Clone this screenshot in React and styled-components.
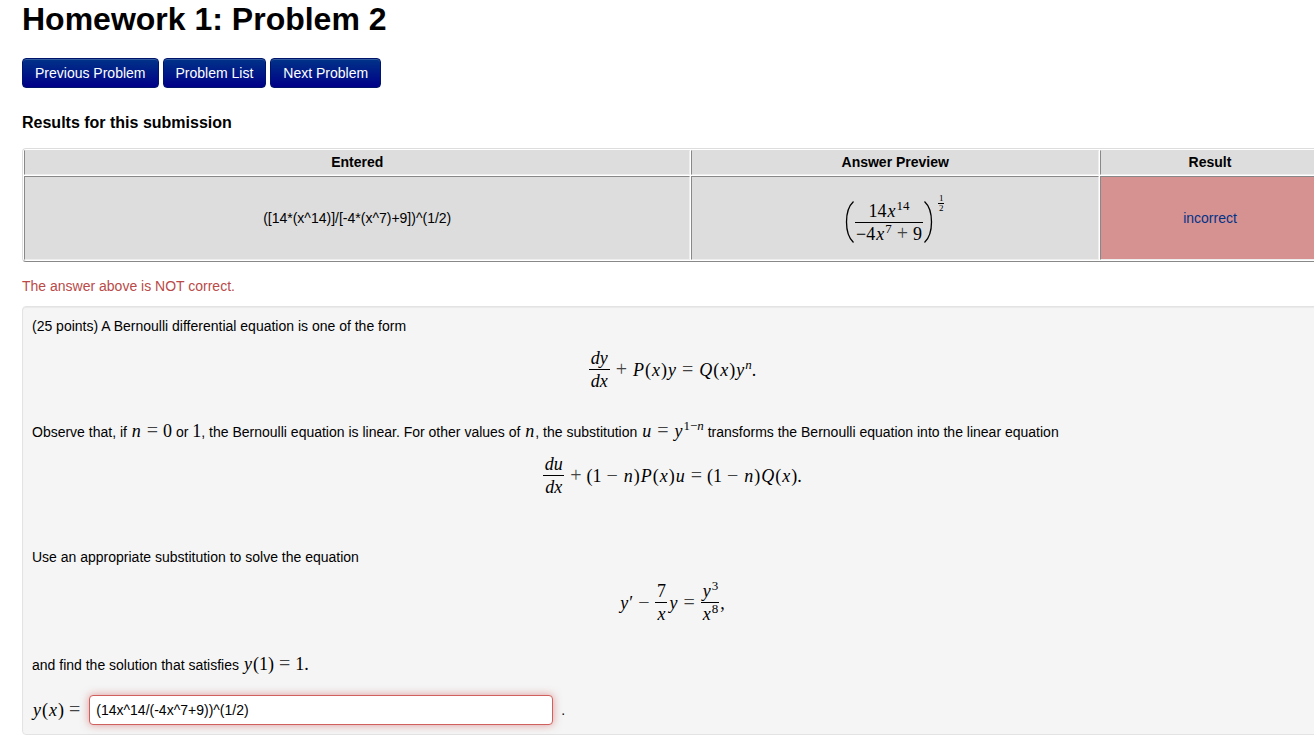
import styled, { createGlobalStyle } from "styled-components";

const GlobalStyle = createGlobalStyle`
  body {
    margin: 0;
    background: #fff;
    color: #000;
    font-family: "Liberation Sans", Arial, sans-serif;
    font-size: 14px;
    line-height: 20px;
    overflow-x: hidden;
  }
`;

// content runs a little past the right edge of the window
const Page = styled.main`
  margin: 0 -8px 0 22px;
`;

const Title = styled.h1`
  margin: 0;
  font-size: 32px;
  line-height: 38px;
`;

const Nav = styled.nav`
  display: flex;
  gap: 4px;
  margin-top: 20px;
`;

const NavButton = styled.button`
  padding: 4px 12px;
  border: 1px solid #00146b;
  border-radius: 4px;
  background: linear-gradient(#003388, #000088);
  box-shadow: inset 0 1px 0 rgba(255, 255, 255, 0.2);
  color: #fff;
  font: inherit;
`;

const SubTitle = styled.h2`
  margin: 25px 0 15px;
  font-size: 16px;
  line-height: 20px;
`;

const Results = styled.table`
  width: 100%;
  border: 1px solid;
  border-color: #ddd #888 #888 #ddd;
  border-radius: 4px;
  border-spacing: 1px;
  text-align: center;
`;

const Head = styled.th`
  width: ${(props) => props.w};
  height: 20px;
  padding: 1px 2px 2px;
  border: 1px solid;
  border-color: #ddd #eee #eee #888;
  background: #ddd;
`;

const Cell = styled.td`
  height: 80px;
  padding: 1px;
  border: 1px solid;
  border-color: #888 #eee #eee #888;
  background: ${(props) => props.bg || "#ddd"};
`;

const ResultLink = styled.a`
  color: #003388;
  text-decoration: none;
`;

const Warning = styled.p`
  margin: 14px 0 10px;
  color: #b94a48;
`;

const Problem = styled.section`
  padding: 9px;
  border: 1px solid #e3e3e3;
  border-radius: 4px;
  background: #f5f5f5;
  box-shadow: inset 0 1px 1px rgba(0, 0, 0, 0.05);
`;

const Text = styled.p`
  margin: 0;
`;

const Math = styled.span`
  font-family: "Liberation Serif", "Times New Roman", serif;
  font-size: 18px;
  line-height: 20px;
  white-space: nowrap;

  i {
    margin: 0 1px;
  }
`;

const Display = styled.div`
  display: flex;
  justify-content: center;
  align-items: center;
  margin: ${(props) => props.m};
`;

const Row = styled(Math)`
  display: flex;
  align-items: center;
`;

const Op = styled.span`
  margin: 0 5px;
  color: #444;
  font-size: 20px;
  line-height: 0;
`;

const Sup = styled.sup`
  font-size: 13px;
  line-height: 0;
  vertical-align: 7px;

  i {
    margin: 0;
  }
`;

const FracBox = styled.span`
  display: inline-flex;
  flex-direction: column;
  margin: 0 1px;
  text-align: center;
  font-size: ${(props) => (props.small ? "9px" : "18px")};
  line-height: ${(props) => (props.small ? "9px" : "22px")};
`;

const Top = styled.span`
  border-bottom: 1px solid #000;
`;

const Bottom = styled.span`
  padding: 0 1px;
`;

function Frac({ top, bottom, small }) {
  return (
    <FracBox small={small ? 1 : undefined}>
      <Top>{top}</Top>
      <Bottom>{bottom}</Bottom>
    </FracBox>
  );
}

const Paren = styled.svg`
  width: 9px;
  height: 42px;
`;

const Power = styled.span`
  align-self: flex-start;
  display: flex;
  margin: -6px 0 0 4px;
`;

const AnswerRow = styled.div`
  display: flex;
  align-items: center;
  margin-top: 20px;
`;

const AnswerInput = styled.input`
  box-sizing: border-box;
  width: 464px;
  height: 30px;
  margin: 0 8px 0 4px;
  padding: 4px 6px;
  border: 1px solid #d0605e;
  border-radius: 4px;
  background: #fff;
  box-shadow: 0 0 8px rgba(200, 60, 60, 0.5);
  color: #000;
  font: inherit;
`;

function App() {
  return (
    <>
      <GlobalStyle />
      <Page>
        <Title>Homework 1: Problem 2</Title>
        <Nav>
          <NavButton>Previous Problem</NavButton>
          <NavButton>Problem List</NavButton>
          <NavButton>Next Problem</NavButton>
        </Nav>

        <SubTitle>Results for this submission</SubTitle>
        <Results>
          <thead>
            <tr>
              <Head w="51.5%">Entered</Head>
              <Head>Answer Preview</Head>
              <Head w="17%">Result</Head>
            </tr>
          </thead>
          <tbody>
            <tr>
              <Cell>([14*(x^14)]/[-4*(x^7)+9])^(1/2)</Cell>
              <Cell>
                <Display m="8px 0 0">
                  <Row>
                    <Paren viewBox="0 0 9 42" fill="none" stroke="#000" strokeWidth="1.3">
                      <path d="M8.500 0.500Q1.500 7 1.500 21T8.500 41.500" />
                    </Paren>
                    <Frac
                      top={<>14<i>x</i><Sup>14</Sup></>}
                      bottom={<>−4<i>x</i><Sup>7</Sup><Op>+</Op>9</>}
                    />
                    <Paren viewBox="0 0 9 42" fill="none" stroke="#000" strokeWidth="1.3">
                      <path d="M0.500 0.500Q7.500 7 7.500 21T0.500 41.500" />
                    </Paren>
                    <Power>
                      <Frac small top="1" bottom="2" />
                    </Power>
                  </Row>
                </Display>
              </Cell>
              <Cell bg="#d69191">
                <ResultLink href="#answer">incorrect</ResultLink>
              </Cell>
            </tr>
          </tbody>
        </Results>

        <Warning>The answer above is NOT correct.</Warning>

        <Problem>
          <Text>(25 points) A Bernoulli differential equation is one of the form</Text>
          <Display m="11px 0 29px">
            <Row>
              <Frac top={<i>dy</i>} bottom={<i>dx</i>} />
              <span>
                <Op>+</Op><i>P</i>(<i>x</i>)<i>y</i><Op>=</Op><i>Q</i>(<i>x</i>)<i>y</i>
                <Sup><i>n</i></Sup>.
              </span>
            </Row>
          </Display>
          <Text>
            Observe that, if <Math><i>n</i><Op>=</Op>0</Math> or <Math>1</Math>, the
            Bernoulli equation is linear. For other values of <Math><i>n</i></Math>, the
            substitution{" "}
            <Math><i>u</i><Op>=</Op><i>y</i><Sup>1−<i>n</i></Sup></Math> transforms the
            Bernoulli equation into the linear equation
          </Text>
          <Display m="11px 0 49px">
            <Row>
              <Frac top={<i>du</i>} bottom={<i>dx</i>} />
              <span>
                <Op>+</Op>(1<Op>−</Op><i>n</i>)<i>P</i>(<i>x</i>)<i>u</i><Op>=</Op>(1
                <Op>−</Op><i>n</i>)<i>Q</i>(<i>x</i>).
              </span>
            </Row>
          </Display>
          <Text>Use an appropriate substitution to solve the equation</Text>
          <Display m="13px 0 29px">
            <Row>
              <span><i>y</i>′<Op>−</Op></span>
              <Frac top="7" bottom={<i>x</i>} />
              <span><i>y</i><Op>=</Op></span>
              <Frac
                top={<><i>y</i><Sup>3</Sup></>}
                bottom={<><i>x</i><Sup>8</Sup></>}
              />
              <span>,</span>
            </Row>
          </Display>
          <Text>
            and find the solution that satisfies{" "}
            <Math><i>y</i>(1)<Op>=</Op>1.</Math>
          </Text>
          <AnswerRow>
            <label htmlFor="answer">
              <Math><i>y</i>(<i>x</i>)<Op>=</Op></Math>
            </label>
            <AnswerInput id="answer" type="text" defaultValue="(14x^14/(-4x^7+9))^(1/2)" />
            <span>.</span>
          </AnswerRow>
        </Problem>
      </Page>
    </>
  );
}

export default App;
